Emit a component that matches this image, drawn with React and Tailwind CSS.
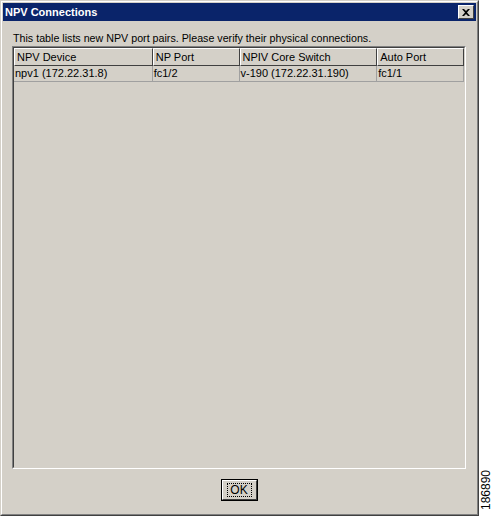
const columns = [
  { label: 'NPV Device', w: 'w-[139px]' },
  { label: 'NP Port', w: 'w-[87px]' },
  { label: 'NPIV Core Switch', w: 'w-[138px]' },
  { label: 'Auto Port', w: 'w-[87px]' },
]

const rows = [['npv1 (172.22.31.8)', 'fc1/2', 'v-190 (172.22.31.190)', 'fc1/1']]

export default function App() {
  return (
    <div className="w-[493px] h-[516px] flex bg-white text-[11px] text-black" style={{ fontFamily: '"Liberation Sans", Arial, sans-serif' }}>
      {/* dialog window */}
      <div className="w-[479px] h-[516px] flex flex-col bg-[#d4d0c8] border-t border-l border-r border-b border-t-[#d4d0c8] border-l-[#d4d0c8] border-r-[#404040] border-b-[#404040]">
        <div className="flex-1 flex flex-col border border-t-white border-l-white border-r-[#808080] border-b-[#808080] p-[1px]">
          {/* title bar */}
          <div className="h-[18px] flex items-center justify-between bg-[#0a246a] pl-[2px] pr-[2px]">
            <span className="text-white font-bold text-[11px]">NPV Connections</span>
            <button className="w-[16px] h-[14px] flex items-center justify-center bg-[#d4d0c8] border border-t-white border-l-white border-r-[#404040] border-b-[#404040]">
              <svg width="8" height="7" viewBox="0 0 8 7">
                <path d="M0 0h2l2 2 2-2h2L5 3.5 8 7H6L4 5 2 7H0l3-3.5z" fill="#000" />
              </svg>
            </button>
          </div>

          <div className="flex-1 flex flex-col pl-[9px] pr-[10px]">
            <p className="mt-[11px] h-[13px] leading-[13px] pl-[1px] text-[10.7px]">This table lists new NPV port pairs. Please verify their physical connections.</p>

            {/* table frame */}
            <div className="mt-[1px] h-[423px] flex flex-col border border-t-[#808080] border-l-[#808080] border-r-white border-b-white">
              <div className="flex-1 border border-t-[#404040] border-l-[#404040] border-r-[#d4d0c8] border-b-[#d4d0c8]">
                <div className="flex">
                  {columns.map(c => (
                    <div key={c.label} className={`${c.w} h-[18px] flex items-center pl-[2px] border border-t-white border-l-white border-r-[#404040] border-b-[#404040]`}>
                      <span className="leading-[13px]">{c.label}</span>
                    </div>
                  ))}
                </div>
                {rows.map((r, i) => (
                  <div key={i} className="flex border-b border-[#a0a0a0]">
                    {r.map((cell, j) => (
                      <div key={j} className={`${columns[j].w} h-[15px] flex items-center pl-[1px] border-r border-[#a0a0a0]`}>
                        <span className="leading-[13px]">{cell}</span>
                      </div>
                    ))}
                  </div>
                ))}
              </div>
            </div>

            <div className="flex justify-center mt-[10px]">
              <button className="w-[37px] h-[22px] flex items-center justify-center border border-black bg-[#d4d0c8]">
                <div className="w-full h-full flex items-center justify-center border border-t-white border-l-white border-r-[#404040] border-b-[#404040]">
                  <div className="w-[25px] h-[14px] flex items-center justify-center border border-dotted border-black">
                    <span className="leading-[12px] text-[12px]">OK</span>
                  </div>
                </div>
              </button>
            </div>
          </div>
        </div>
      </div>

      {/* figure number strip */}
      <div className="flex-1 flex items-end justify-center pb-[6px]">
        <span className="block [writing-mode:vertical-rl] rotate-180 text-[12px] leading-[12px]" style={{ fontFamily: '"Liberation Sans", Arial, sans-serif' }}>186890</span>
      </div>
    </div>
  )
}
